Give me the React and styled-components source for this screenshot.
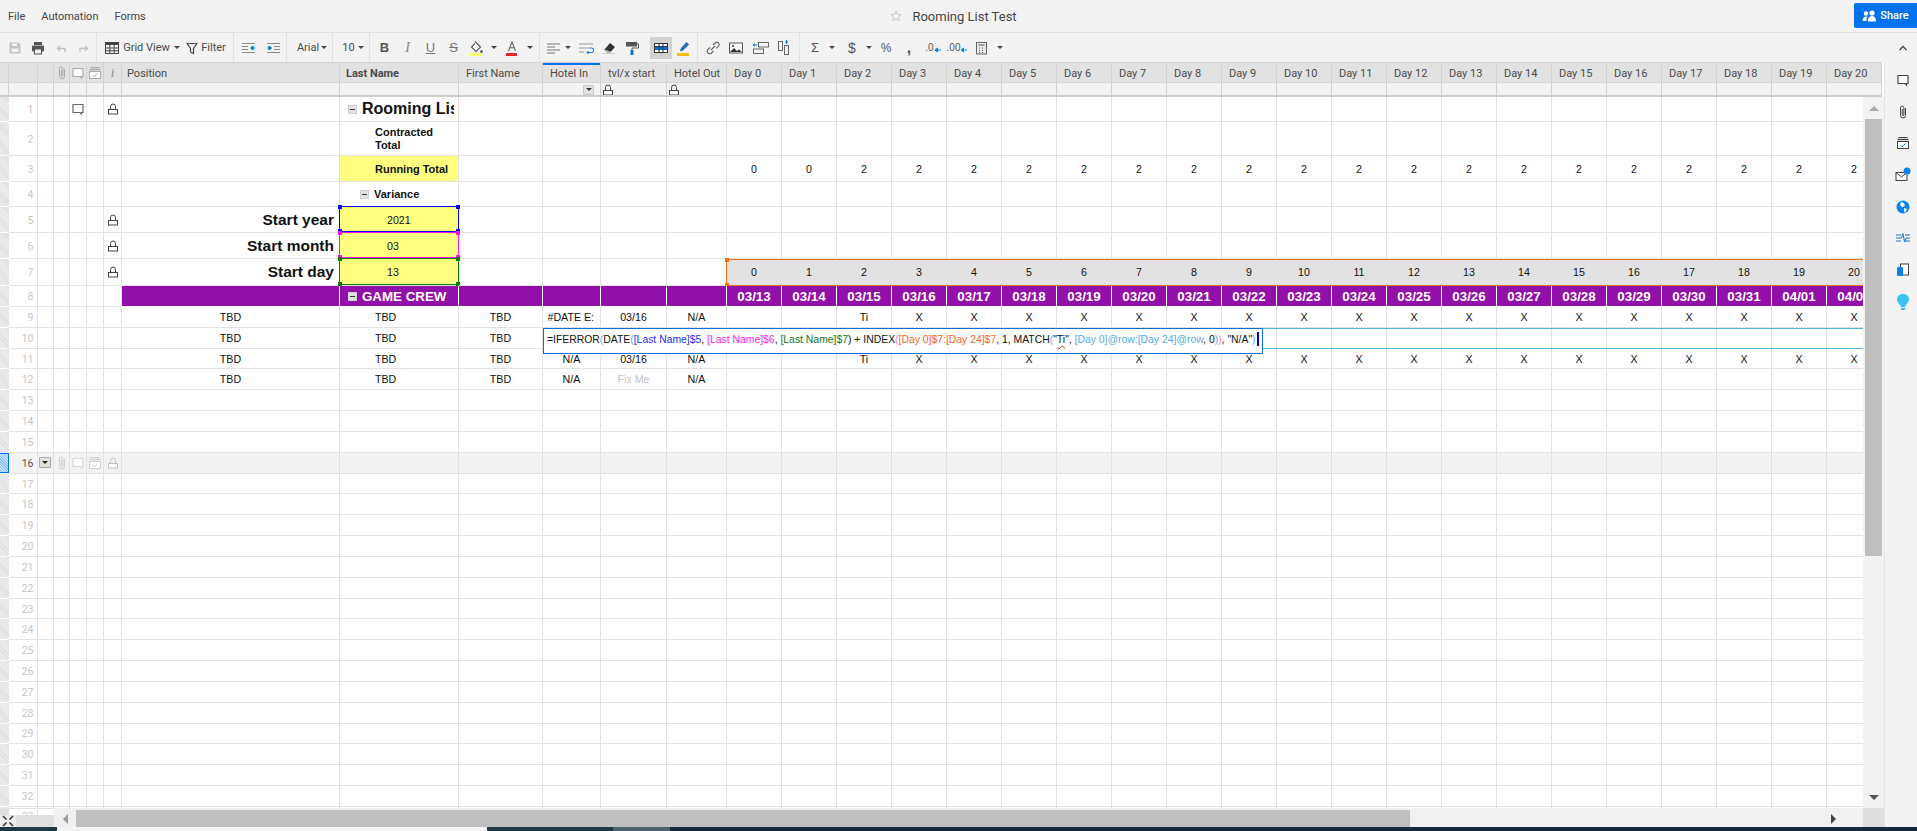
import React from "react";
import styled, { createGlobalStyle } from "styled-components";

const GlobalStyle = createGlobalStyle`
  html, body { margin: 0; padding: 0; background: #fff; overflow: hidden; }
  body { font-family: Roboto, "Liberation Sans", sans-serif; }
`;

const LINE = "#e2e2e2";
const HEAD = "#e2e2e2";
const PANEL = "#f3f3f3";
const PURPLE = "#930fa9";

const COLUMNS = "9px 28.5px 16.5px 16px 17px 17px 18px 218px 119px 84px 58px 66px 60px repeat(25, 55px)";

const Page = styled.div`
  width: 1917px;
  height: 831px;
  display: flex;
  flex-direction: column;
  overflow: hidden;
  background: ${PANEL};
`;

/* top menu */
const MenuBar = styled.div`
  height: 33px;
  flex: none;
  display: grid;
  grid-template-columns: 1fr auto 1fr;
  align-items: center;
  box-sizing: border-box;
  border-bottom: 1px solid ${LINE};
`;

const MenuList = styled.div`
  display: flex;
  gap: 16px;
  padding-left: 8px;
`;

const MenuItem = styled.span`
  font-size: 11px;
  color: #444;
`;

const Title = styled.div`
  display: flex;
  align-items: center;
  gap: 10px;
  padding-right: 10px;
  font-size: 13px;
  color: #444;
`;

const ShareWrap = styled.div`
  display: flex;
  justify-content: flex-end;
`;

const ShareButton = styled.button`
  width: 63px;
  height: 25px;
  margin-bottom: 1px;
  border: 0;
  border-radius: 2px 0 0 2px;
  background: #0073ec;
  color: #fff;
  font: 500 11px Roboto, sans-serif;
  display: flex;
  align-items: center;
  justify-content: center;
  gap: 4px;
  padding: 0;
`;

/* toolbar */
const ToolBar = styled.div`
  height: 29px;
  flex: none;
  display: flex;
  align-items: stretch;
  box-sizing: border-box;
`;

const ToolGroup = styled.div`
  width: ${(p) => p.$w}px;
  flex: none;
  box-sizing: border-box;
  padding-left: ${(p) => p.$pad || 0}px;
  display: flex;
  align-items: center;
  border-right: ${(p) => (p.$last ? "0" : `1px solid ${LINE}`)};
`;

const ToolButton = styled.div`
  width: ${(p) => p.$w || 23}px;
  height: 22px;
  flex: none;
  display: flex;
  align-items: center;
  justify-content: center;
  gap: ${(p) => p.$gap || 0}px;
  font-size: 11px;
  white-space: nowrap;
  color: #4a4a4a;
  background: ${(p) => (p.$active ? "#d2d2d2" : "transparent")};
  margin-left: ${(p) => p.$ml || 0}px;
`;

const Glyph = styled.span`
  font-family: ${(p) => (p.$serif ? '"Liberation Serif", serif' : '"Liberation Sans", sans-serif')};
  font-size: ${(p) => p.$size || 13}px;
  font-weight: ${(p) => (p.$bold ? 700 : 400)};
  font-style: ${(p) => (p.$italic ? "italic" : "normal")};
  text-decoration: ${(p) => p.$line || "none"};
  color: ${(p) => p.$color || "#555"};
`;

const Caret = styled.span`
  width: 0;
  height: 0;
  flex: none;
  border-left: 3px solid transparent;
  border-right: 3px solid transparent;
  border-top: 3px solid #444;
`;

const DecimalMark = styled.span`
  display: flex;
  align-items: flex-end;
  gap: 0;
`;

const ChevronWrap = styled.div`
  margin-left: auto;
  padding-right: 8px;
  display: flex;
  align-items: center;
`;

/* sheet */
const Main = styled.div`
  flex: 1;
  min-height: 0;
  display: flex;
`;

const Sheet = styled.div`
  width: 1884px;
  flex: none;
  display: flex;
  flex-direction: column;
  min-height: 0;
  background: #fff;
`;

const HeadClip = styled.div`
  width: 1882px;
  overflow: hidden;
  flex: none;
`;

const HeadRow = styled.div`
  display: grid;
  grid-template-columns: ${COLUMNS};
  height: ${(p) => p.$h}px;
  box-sizing: border-box;
  background: ${(p) => p.$bg};
  border-top: ${(p) => (p.$top ? "1px solid #d6d6d6" : "0")};
  border-bottom: ${(p) => (p.$thick ? "2px solid #cfcfcf" : "1px solid #d6d6d6")};
`;

const HeadCell = styled.div`
  box-sizing: border-box;
  position: relative;
  border-right: 1px solid #d2d2d2;
  display: flex;
  align-items: center;
  justify-content: ${(p) => (p.$center ? "center" : "flex-start")};
  padding-left: ${(p) => (p.$center ? 0 : p.$pad ?? 7)}px;
  padding-top: 1px;
  font-size: 11px;
  font-weight: ${(p) => (p.$bold ? 700 : 400)};
  color: #4b4b4b;
  white-space: nowrap;
  overflow: hidden;
  box-shadow: ${(p) => (p.$mark ? "inset 0 2px 0 #0073ec" : "none")};
`;

const FilterBox = styled.span`
  margin-left: auto;
  margin-right: 6px;
  width: 11px;
  height: 10px;
  background: #e2e2e2;
  border: 1px solid #c8c8c8;
  border-radius: 1px;
  box-sizing: border-box;
  display: flex;
  align-items: center;
  justify-content: center;
`;

const BodyWrap = styled.div`
  flex: 1;
  min-height: 0;
  display: flex;
`;

const Body = styled.div`
  width: 1863px;
  flex: none;
  overflow: hidden;
  position: relative;
`;

const Row = styled.div`
  display: grid;
  grid-template-columns: ${COLUMNS};
  height: ${(p) => p.$h}px;
  box-sizing: border-box;
  position: relative;
  background: ${(p) => (p.$selected ? PANEL : "#fff")};
`;

const Cell = styled.div`
  box-sizing: border-box;
  min-width: 0;
  position: relative;
  border-right: 1px solid ${LINE};
  border-bottom: 1px solid ${LINE};
  display: flex;
  align-items: center;
  justify-content: ${(p) => p.$align || "center"};
  padding-left: ${(p) => p.$pl || 0}px;
  padding-right: ${(p) => p.$pr || 0}px;
  background: ${(p) => p.$bg || "transparent"};
  font-family: "Liberation Sans", Arial, sans-serif;
  font-size: ${(p) => p.$size || 10.67}px;
  line-height: ${(p) => p.$lh || "normal"};
  font-weight: ${(p) => (p.$bold ? 700 : 400)};
  color: ${(p) => p.$color || "#111"};
  white-space: ${(p) => (p.$wrap ? "normal" : "nowrap")};
  overflow: ${(p) => (p.$clip ? "hidden" : "visible")};
`;

const CellClip = styled.span`
  display: block;
  overflow: hidden;
  width: ${(p) => p.$w}px;
`;

const Handle = styled.div`
  box-sizing: border-box;
  margin-bottom: 1px;
  background-color: ${(p) => (p.$selected ? "#8cc0f4" : "#dedede")};
  background-image: repeating-linear-gradient(
    45deg,
    rgba(255, 255, 255, 0.5) 0 1px,
    transparent 1px 2px
  );
  border: ${(p) => (p.$selected ? "1px solid #0073ec" : "0")};
  border-left: 0;
`;

const RowNum = styled(Cell)`
  justify-content: flex-end;
  padding-right: 3px;
  padding-top: 1px;
  font-family: Roboto, sans-serif;
  font-size: 10.5px;
  color: ${(p) => (p.$selected ? "#555" : "#c6c6c6")};
`;

const MinusBox = styled.span`
  width: ${(p) => p.$s || 9}px;
  height: ${(p) => p.$s || 9}px;
  flex: none;
  margin-right: ${(p) => p.$mr || 5}px;
  background: #e2e2e2;
  border: 1px solid #cfcfcf;
  box-sizing: border-box;
  display: flex;
  align-items: center;
  justify-content: center;
  &::after {
    content: "";
    width: 5px;
    height: 1px;
    background: #333;
  }
`;

const RowMenu = styled.span`
  width: 12px;
  height: 11px;
  background: #e0e0e0;
  border: 1px solid #a9a9a9;
  border-radius: 1px;
  box-sizing: border-box;
  display: flex;
  align-items: center;
  justify-content: center;
`;

const RefBox = styled.div`
  position: absolute;
  inset: -1px -1px 0 -1px;
  border: 1px solid ${(p) => p.$color};
  pointer-events: none;
`;

const Dot = styled.i`
  position: absolute;
  width: 4px;
  height: 4px;
  background: ${(p) => p.$color};
  top: ${(p) => (p.$b ? "auto" : "-2px")};
  bottom: ${(p) => (p.$b ? "-2px" : "auto")};
  left: ${(p) => (p.$r ? "auto" : "-2px")};
  right: ${(p) => (p.$r ? "-2px" : "auto")};
`;

const RangeBar = styled.div`
  position: absolute;
  top: ${(p) => p.$top || 0}px;
  bottom: 0;
  left: 726px;
  right: 0;
  border-top: 1px solid ${(p) => p.$color};
  border-bottom: 1px solid ${(p) => p.$color};
  border-left: ${(p) => (p.$open ? "0" : `1px solid ${p.$color}`)};
  pointer-events: none;
`;

const FormulaBox = styled.div`
  position: absolute;
  z-index: 3;
  left: 543px;
  top: 0;
  width: 720px;
  height: 26px;
  box-sizing: border-box;
  background: #fff;
  border: 1px solid #0a6fd8;
  padding: 3px 0 0 3px;
  font: 10.4px/16px "Liberation Sans", Arial, sans-serif;
  color: #111;
  white-space: nowrap;
  overflow: hidden;
`;

const Tok = styled.span`
  color: ${(p) => p.$c};
`;

const Squiggle = styled.span`
  text-decoration: underline wavy #e02020 1px;
  text-underline-offset: 2px;
`;

const TextCaret = styled.span`
  display: inline-block;
  width: 2px;
  height: 14px;
  margin-left: 1px;
  vertical-align: -3px;
  background: #0000d0;
`;

/* scrollbars */
const VScroll = styled.div`
  flex: 1;
  display: flex;
  flex-direction: column;
  align-items: center;
  background: ${PANEL};
`;

const ScrollArrowBox = styled.div`
  height: ${(p) => p.$h}px;
  flex: none;
  display: flex;
  align-items: center;
  justify-content: center;
`;

const VThumb = styled.div`
  width: 17px;
  height: 437px;
  flex: none;
  background: #bfbfbf;
`;

const Spring = styled.div`
  flex: 1;
`;

const HScroll = styled.div`
  height: 19px;
  flex: none;
  display: flex;
  background: #f0f0f0;
`;

const CornerStub = styled.div`
  width: 54px;
  flex: none;
  display: flex;
  flex-direction: column;
  background: #fff;
`;

const StubPeek = styled.div`
  height: 7px;
  flex: none;
  overflow: hidden;
  display: flex;
  box-sizing: border-box;
  border-top: 1px solid ${LINE};
`;

const StubHandle = styled.div`
  width: 9px;
  background: #dedede;
`;

const StubNumber = styled.div`
  width: 28.5px;
  box-sizing: border-box;
  border-right: 1px solid ${LINE};
  padding: 2px 3px 0 0;
  text-align: right;
  font-size: 10.5px;
  line-height: 12px;
  color: #c6c6c6;
`;

const StubBar = styled.div`
  flex: 1;
  display: flex;
  background: #e0e0e0;
`;

const StubIcon = styled.div`
  width: 16px;
  background: #ececec;
  display: flex;
  align-items: center;
  justify-content: center;
`;

const HArrowLeft = styled.div`
  width: 22px;
  flex: none;
  display: flex;
  align-items: center;
  justify-content: center;
  padding-top: 2px;
`;

const HThumb = styled.div`
  width: 1334px;
  flex: none;
  margin-top: 2px;
  background: #bfbfbf;
`;

const HArrowRight = styled.div`
  margin-left: auto;
  width: 32px;
  display: flex;
  align-items: center;
  justify-content: flex-start;
  padding-top: 2px;
`;

const HCorner = styled.div`
  width: 21px;
  flex: none;
  background: #dedede;
`;

/* right rail */
const Rail = styled.div`
  flex: 1;
  display: flex;
  flex-direction: column;
  align-items: center;
  padding: 2px 0 0 4px;
  border-left: 1px solid #e6e6e6;
  box-sizing: border-box;
`;

const RailItem = styled.div`
  height: 31.7px;
  flex: none;
  display: flex;
  align-items: center;
  justify-content: center;
`;

/* taskbar strip at the very bottom */
const Strip = styled.div`
  height: 4px;
  flex: none;
  display: grid;
  grid-template-columns: 57px 430px 126px 57px 1fr;
`;

const StripPart = styled.div`
  background: ${(p) => p.$c};
`;

/* icons */
const Svg = ({ w = 16, h = 16, vb, children }) => (
  <svg width={w} height={h} viewBox={vb || `0 0 ${w} ${h}`} fill="none">
    {children}
  </svg>
);

const CommentIcon = ({ c = "#555" }) => (
  <Svg w={14} h={14}>
    <path d="M2 2.5h10v8H10.5v1.6L9 10.5H2z" stroke={c} strokeWidth="1.2" fill="#fff" />
  </Svg>
);

const ClipIcon = ({ c = "#555" }) => (
  <Svg w={14} h={16}>
    <path
      d="M9.5 4v7.500a2.500 2.500 0 0 1-5 0V3.800a1.700 1.700 0 0 1 3.400 0v7a.8.8 0 0 1-1.600 0V5"
      stroke={c}
      strokeWidth="1"
    />
  </Svg>
);

const ProofIcon = ({ c = "#aaa", tick = "#aaa" }) => (
  <Svg w={14} h={14}>
    <path d="M2.5 1.5h9" stroke={c} />
    <path d="M1.5 3.5h11" stroke={c} strokeWidth="1.4" />
    <rect x="1.5" y="5.5" width="11" height="7" stroke={c} fill="#fff" />
    <path d="M4.500 9l1.800 1.800L9.500 7.500" stroke={tick} />
  </Svg>
);

const LockIcon = ({ c = "#444" }) => (
  <Svg w={12} h={12}>
    <path d="M3.500 6V3.500a2.500 2.500 0 0 1 5 0V6" stroke={c} />
    <rect x="1.5" y="6.5" width="9" height="4.5" stroke={c} fill="#fff" />
  </Svg>
);

const tb = {
  save: (
    <Svg>
      <path d="M2.500 2.500h9L13.500 4.500V13.500H2.500z" fill="#c4c4c4" />
      <rect x="5" y="3.500" width="5" height="2.500" fill="#f3f3f3" />
      <rect x="4.500" y="8.500" width="7" height="3.500" fill="#f3f3f3" />
    </Svg>
  ),
  print: (
    <Svg>
      <rect x="4" y="2" width="8" height="3" fill="#555" />
      <rect x="2" y="5.5" width="12" height="6" rx="1" fill="#555" />
      <rect x="4.5" y="9" width="7" height="5" fill="#f3f3f3" stroke="#555" />
    </Svg>
  ),
  undo: (
    <Svg>
      <path d="M12 12V8.500H5M7 6L4.500 8.500 7 11" stroke="#c0c0c0" strokeWidth="1.3" />
    </Svg>
  ),
  redo: (
    <Svg>
      <path d="M4 12V8.500h7M9 6l2.500 2.500L9 11" stroke="#c0c0c0" strokeWidth="1.3" />
    </Svg>
  ),
  grid: (
    <Svg w={14} h={14}>
      <rect x="0.5" y="1.5" width="13" height="11" stroke="#444" />
      <rect x="0.5" y="1.5" width="13" height="2.5" fill="#444" />
      <path d="M0.500 7h13M0.500 9.800h13M4.800 4v8.500M9.200 4v8.500" stroke="#444" />
    </Svg>
  ),
  filter: (
    <Svg w={12} h={14}>
      <path d="M1 2.500h10L7.500 7.500v5l-3-1.500V7.500z" stroke="#444" strokeWidth="1.2" />
    </Svg>
  ),
  outdent: (
    <Svg>
      <path d="M1 3.500h13M1 6.500h6M1 9.500h6M1 12.500h13" stroke="#888" />
      <path d="M14 8H10M12 6L9.500 8l2.500 2z" stroke="#0073ec" fill="#0073ec" />
    </Svg>
  ),
  indent: (
    <Svg>
      <path d="M2 3.500h13M9 6.500h6M9 9.500h6M2 12.500h13" stroke="#888" />
      <path d="M2 8h4M4 6l2.500 2L4 10z" stroke="#0073ec" fill="#0073ec" />
    </Svg>
  ),
  fill: (
    <Svg>
      <path d="M6 1.500l5.500 5.500L7 11.500 2.500 7 6 3.500" stroke="#555" strokeWidth="1.1" fill="#fff" />
      <path d="M12.500 9.500l1.200 1.800a1.300 1.300 0 1 1-2.400 0z" fill="#555" />
      <rect x="1" y="13" width="11" height="3" fill="#fdfd6c" />
    </Svg>
  ),
  fontColor: (
    <Svg>
      <path d="M4.500 11L8 2l3.500 9M6 7.800h4" stroke="#666" strokeWidth="1.1" />
      <rect x="2" y="13" width="11" height="3" fill="#e8262a" />
    </Svg>
  ),
  align: (
    <Svg>
      <path d="M1 4h13M1 7h8M1 10h13M1 13h8" stroke="#777" strokeWidth="1.1" />
    </Svg>
  ),
  wrap: (
    <Svg>
      <path d="M1 4h14M1 8h11M1 12h5" stroke="#999" />
      <path d="M12 8h1.500a2 2 0 0 1 0 4.500H9M10.500 11L9 12.500l1.500 1.500" stroke="#0073ec" />
    </Svg>
  ),
  eraser: (
    <Svg>
      <path d="M9 3l5 4-4 4.500H6L3.500 9.500z" fill="#333" />
      <path d="M3.500 9.500l3 2.500h3.500" stroke="#777" fill="#fff" />
      <path d="M1 13.500h13" stroke="#ccc" />
    </Svg>
  ),
  paint: (
    <Svg>
      <rect x="2" y="2" width="11" height="4.5" fill="#555" />
      <path d="M13 4h1.500v4H8v2" stroke="#555" />
      <rect x="6.5" y="10" width="3" height="5" fill="#1271c4" />
    </Svg>
  ),
  freeze: (
    <Svg w={14} h={12}>
      <rect x="0.5" y="1.5" width="13" height="9" fill="#fff" stroke="#333" />
      <rect x="1" y="5" width="12" height="3" fill="#0a6fd8" />
      <path d="M5 1.500v9M9 1.500v9M0.500 4.500h13" stroke="#333" />
    </Svg>
  ),
  pen: (
    <Svg>
      <path d="M10.500 2l2.500 2.500L7 10.500 3.800 11.500 5 8z" fill="#1e6cc0" />
      <rect x="1" y="13" width="12" height="3" fill="#f6b91a" />
    </Svg>
  ),
  link: (
    <Svg>
      <path d="M6 10l4-4M5 7.500L3 9.500a2.400 2.400 0 0 0 3.500 3.500l2-2M8 5l2-2a2.400 2.400 0 0 1 3.400 3.400l-2 2" stroke="#666" strokeWidth="1.1" />
    </Svg>
  ),
  image: (
    <Svg>
      <rect x="1.5" y="3" width="13" height="10" fill="#fff" stroke="#555" />
      <path d="M2 12l4-4 3 3 2-1.500 3 2.500z" fill="#333" />
      <circle cx="5" cy="6" r="1" fill="#333" />
    </Svg>
  ),
  rowAdd: (
    <Svg w={18} h={16}>
      <rect x="6.5" y="2.5" width="10" height="4.5" stroke="#666" />
      <rect x="1.5" y="9" width="10" height="4.5" stroke="#666" />
      <path d="M1 5h4M3 3.500L1 5l2 1.500" stroke="#0073ec" />
    </Svg>
  ),
  colAdd: (
    <Svg w={14} h={16}>
      <rect x="1.5" y="1.5" width="4" height="9" stroke="#666" />
      <rect x="7.5" y="5.5" width="4" height="9" stroke="#666" />
      <path d="M9.500 0v4M8 2h3" stroke="#0073ec" />
    </Svg>
  ),
  format: (
    <Svg>
      <rect x="2.5" y="2.5" width="10" height="11.5" fill="#e8e8e8" stroke="#666" />
      <path d="M4.500 5h6M5 8h1M8 8h1M5 10.500h1M8 10.500h1M5 12.500h1M8 12.500h1" stroke="#555" />
    </Svg>
  ),
  chevron: (
    <Svg w={12} h={12}>
      <path d="M2.500 8L6 4.500 9.500 8" stroke="#444" strokeWidth="1.3" />
    </Svg>
  ),
  blueArrow: (
    <Svg w={7} h={6}>
      <path d="M7 3H2M3.500 1L1 3l2.500 2z" stroke="#0a84ec" fill="#0a84ec" />
    </Svg>
  ),
};

const StarIcon = () => (
  <Svg w={12} h={12}>
    <path d="M6 1l1.500 3.400 3.600.3-2.800 2.400.9 3.600L6 8.800l-3.200 1.900.9-3.600L.9 4.700l3.600-.3z" stroke="#c8c8c8" />
  </Svg>
);

const PeopleIcon = () => (
  <Svg w={14} h={12}>
    <circle cx="4" cy="3.5" r="2.2" fill="#fff" />
    <circle cx="10" cy="3" r="2.6" fill="#fff" />
    <path d="M0.500 11c0-3 1.500-4.500 3.500-4.500 .6 0 1 .1 1.400.3C4.600 8 4.400 9.400 4.400 11zM5.800 11.500c0-3.500 1.600-5.500 4.200-5.500s4 2 4 5.500z" fill="#fff" />
  </Svg>
);

const FitIcon = () => (
  <Svg w={12} h={12}>
    <path d="M1 1l3.500 3.500M11 1L7.500 4.500M1 11l3.500-3.500M11 11L7.500 7.500" stroke="#222" strokeWidth="1.4" />
  </Svg>
);

const Tri = ({ dir, c = "#555", s = 5 }) => {
  const pts = {
    up: `0,${s} ${s},0 ${s * 2},${s}`,
    down: `0,0 ${s * 2},0 ${s},${s}`,
    left: `${s},0 ${s},${s * 2} 0,${s}`,
    right: `0,0 0,${s * 2} ${s},${s}`,
  }[dir];
  const horiz = dir === "up" || dir === "down";
  return (
    <svg width={horiz ? s * 2 : s} height={horiz ? s : s * 2}>
      <polygon points={pts} fill={c} />
    </svg>
  );
};

const railIcons = [
  <CommentIcon key="c" c="#444" />,
  <ClipIcon key="a" c="#444" />,
  <ProofIcon key="p" c="#444" tick="#0a6fd8" />,
  <Svg key="m" w={16} h={16}>
    <rect x="1" y="5.5" width="11" height="8" fill="#fff" stroke="#444" />
    <path d="M1 5.500l5.500 4.500L12 5.500" stroke="#444" />
    <circle cx="12" cy="4" r="3.5" fill="#0a84ec" />
  </Svg>,
  <Svg key="g" w={16} h={16}>
    <circle cx="8" cy="8" r="6.5" fill="#0a84ec" />
    <path d="M6 3l3 1 1 3-3 1-2-2zM9 9l3 1-2 4-1-2z" fill="#fff" />
  </Svg>,
  <Svg key="s" w={16} h={16}>
    <path d="M1 5h5M1 8h4M1 11h5M10 5h5M11 8h4M10 11h5" stroke="#1c75c8" />
    <path d="M5 8h1.500L8 3.500 9.500 12 11 8" stroke="#1c75c8" />
  </Svg>,
  <Svg key="b" w={16} h={16}>
    <rect x="5.5" y="2" width="8" height="11" fill="#fff" stroke="#444" />
    <rect x="2" y="5" width="6" height="9" rx="1" fill="#0a84ec" />
  </Svg>,
  <Svg key="l" w={16} h={18}>
    <path d="M8 1c4 0 6 2.600 6 5.500S10.500 11.500 10 14H6C5.500 11.500 2 9.400 2 6.500S4 1 8 1z" fill="#39c6ee" />
    <rect x="6" y="15" width="4" height="2" fill="#39c6ee" />
  </Svg>,
];

/* sheet data */
const DAYS = Array.from({ length: 25 }, (_, i) => i);
const dateFor = (i) => {
  const d = new Date(2021, 2, 13 + i);
  return `${String(d.getMonth() + 1).padStart(2, "0")}/${String(d.getDate()).padStart(2, "0")}`;
};

const rowHeight = (n) => ({ 1: 25, 2: 34, 3: 26, 4: 25, 5: 26, 6: 26, 7: 27, 8: 21 })[n] || 20.83;

const CREW = {
  9: { hotel: "#DATE E:", tvl: "03/16" },
  10: { hotel: "", tvl: "" },
  11: { hotel: "N/A", tvl: "03/16" },
  12: { hotel: "N/A", tvl: "Fix Me", muted: true },
};

const Empty = ({ n = 1 }) => Array.from({ length: n }, (_, i) => <Cell key={i} />);

const LeftColumns = ({ n, selected, comment, lock }) => (
  <>
    <Handle $selected={selected} />
    <RowNum $selected={selected}>{n}</RowNum>
    <Cell>
      {selected && (
        <RowMenu>
          <Tri dir="down" c="#222" s={3} />
        </RowMenu>
      )}
    </Cell>
    <Cell>{selected && <ClipIcon c="#d0d0d0" />}</Cell>
    <Cell>{(comment || selected) && <CommentIcon c={selected ? "#d8d8d8" : "#666"} />}</Cell>
    <Cell>{selected && <ProofIcon c="#d0d0d0" tick="#d0d0d0" />}</Cell>
    <Cell>{(lock || selected) && <LockIcon c={selected ? "#c4c4c4" : "#444"} />}</Cell>
  </>
);

const RangeCell = ({ color, children, pl }) => (
  <Cell $bg="#ffff80" $align="flex-start" $pl={pl}>
    {children}
    <RefBox $color={color}>
      <Dot $color={color} />
      <Dot $color={color} $r />
      <Dot $color={color} $b />
      <Dot $color={color} $b $r />
    </RefBox>
  </Cell>
);

const LabelCell = ({ children }) => (
  <Cell $align="flex-end" $pr={5} $size={15.5} $bold>
    {children}
  </Cell>
);

const PurpleCell = styled(Cell)`
  background: ${PURPLE};
  border-right-color: #fff;
  border-bottom-color: #fff;
`;

const Formula = () => (
  <FormulaBox>
    =IFERROR<Tok $c="#55b4dc">(</Tok>DATE<Tok $c="#55b4dc">(</Tok>
    <Tok $c="#1f2fe8">[Last Name]$5</Tok>, <Tok $c="#f01ff0">[Last Name]$6</Tok>,{" "}
    <Tok $c="#0a7a2a">[Last Name]$7</Tok>) + INDEX<Tok $c="#f080e0">(</Tok>
    <Tok $c="#f3661c">[Day 0]$7:[Day 24]$7</Tok>, 1, MATCH<Tok $c="#55b4dc">(</Tok>"
    <Squiggle>Ti</Squiggle>", <Tok $c="#55aee0">[Day 0]@row:[Day 24]@row</Tok>, 0
    <Tok $c="#55b4dc">)</Tok>
    <Tok $c="#f080e0">)</Tok>, "N/A"<Tok $c="#55b4dc">)</Tok>
    <TextCaret />
  </FormulaBox>
);

const SheetRow = ({ n }) => {
  const h = rowHeight(n);
  const left = (
    <LeftColumns
      n={n}
      selected={n === 16}
      comment={n === 1}
      lock={n === 1 || n === 5 || n === 6 || n === 7}
    />
  );

  if (n === 1) {
    return (
      <Row $h={h}>
        {left}
        <Cell />
        <Cell $align="flex-start" $pl={8} $size={16} $bold $clip>
          <MinusBox $mr={5} />
          <CellClip $w={92}>Rooming List Test</CellClip>
        </Cell>
        <Empty n={29} />
      </Row>
    );
  }
  if (n === 2) {
    return (
      <Row $h={h}>
        {left}
        <Cell />
        <Cell $align="flex-start" $pl={35} $size={11} $lh="13px" $bold $wrap>
          Contracted Total
        </Cell>
        <Empty n={29} />
      </Row>
    );
  }
  if (n === 3) {
    return (
      <Row $h={h}>
        {left}
        <Cell />
        <Cell $align="flex-start" $pl={35} $size={11} $bold $bg="#ffff80">
          Running Total
        </Cell>
        <Empty n={4} />
        {DAYS.map((d) => (
          <Cell key={d}>{d < 2 ? 0 : 2}</Cell>
        ))}
      </Row>
    );
  }
  if (n === 4) {
    return (
      <Row $h={h}>
        {left}
        <Cell />
        <Cell $align="flex-start" $pl={20} $size={11} $bold>
          <MinusBox $mr={5} />
          Variance
        </Cell>
        <Empty n={29} />
      </Row>
    );
  }
  if (n >= 5 && n <= 7) {
    const label = { 5: "Start year", 6: "Start month", 7: "Start day" }[n];
    const value = { 5: "2021", 6: "03", 7: "13" }[n];
    const color = { 5: "#0000f0", 6: "#ff10f0", 7: "#0a7a0a" }[n];
    return (
      <Row $h={h}>
        {left}
        <LabelCell>{label}</LabelCell>
        <RangeCell color={color} pl={47}>
          {value}
        </RangeCell>
        <Empty n={4} />
        {DAYS.map((d) =>
          n === 7 ? (
            <Cell key={d} $bg={HEAD}>
              {d}
            </Cell>
          ) : (
            <Cell key={d} />
          )
        )}
        {n === 7 && (
          <RangeBar $color="#f36f16">
            <Dot $color="#f36f16" />
            <Dot $color="#f36f16" $b />
          </RangeBar>
        )}
      </Row>
    );
  }
  if (n === 8) {
    return (
      <Row $h={h}>
        {left}
        <PurpleCell />
        <PurpleCell $align="flex-start" $pl={8} $size={13.33} $bold $color="#fff">
          <MinusBox $mr={5} />
          GAME CREW
        </PurpleCell>
        {[0, 1, 2, 3].map((i) => (
          <PurpleCell key={i} />
        ))}
        {DAYS.map((d) => (
          <PurpleCell key={d} $size={13.33} $bold $color="#fff">
            {dateFor(d)}
          </PurpleCell>
        ))}
      </Row>
    );
  }
  if (CREW[n]) {
    const row = CREW[n];
    const showDays = n === 9 || n === 11;
    return (
      <Row $h={h}>
        {left}
        <Cell>TBD</Cell>
        <Cell $align="flex-start" $pl={35}>
          TBD
        </Cell>
        <Cell>TBD</Cell>
        <Cell $clip>{n === 9 ? <CellClip $w={48}>{row.hotel}</CellClip> : row.hotel}</Cell>
        <Cell $color={row.muted ? "#c4c4c4" : "#111"}>{row.tvl}</Cell>
        <Cell>{n === 10 ? "" : "N/A"}</Cell>
        {DAYS.map((d) => (
          <Cell key={d}>{showDays && d >= 2 ? (d === 2 ? "Ti" : "X") : ""}</Cell>
        ))}
        {n === 10 && <RangeBar $color="#55b4dc" $open />}
        {n === 10 && <Formula />}
      </Row>
    );
  }
  return (
    <Row $h={h} $selected={n === 16}>
      {left}
      <Empty n={31} />
    </Row>
  );
};

const ROWS = Array.from({ length: 33 }, (_, i) => i + 1);

const App = () => (
  <Page>
    <GlobalStyle />
    <MenuBar>
      <MenuList>
        <MenuItem>File</MenuItem>
        <MenuItem>Automation</MenuItem>
        <MenuItem>Forms</MenuItem>
      </MenuList>
      <Title>
        <StarIcon />
        Rooming List Test
      </Title>
      <ShareWrap>
        <ShareButton>
          <PeopleIcon />
          Share
        </ShareButton>
      </ShareWrap>
    </MenuBar>

    <ToolBar>
      <ToolGroup $w={97} $pad={3}>
        <ToolButton>{tb.save}</ToolButton>
        <ToolButton>{tb.print}</ToolButton>
        <ToolButton>{tb.undo}</ToolButton>
        <ToolButton>{tb.redo}</ToolButton>
      </ToolGroup>
      <ToolGroup $w={137} $pad={8}>
        <ToolButton $w={75} $gap={4}>
          {tb.grid}
          Grid View
          <Caret />
        </ToolButton>
        <ToolButton $w={40} $gap={3} $ml={6}>
          {tb.filter}
          Filter
        </ToolButton>
      </ToolGroup>
      <ToolGroup $w={53} $pad={3}>
        <ToolButton $w={24}>{tb.outdent}</ToolButton>
        <ToolButton $w={24}>{tb.indent}</ToolButton>
      </ToolGroup>
      <ToolGroup $w={46} $pad={9}>
        <ToolButton $w={32} $gap={2}>
          Arial
          <Caret />
        </ToolButton>
      </ToolGroup>
      <ToolGroup $w={37} $pad={9}>
        <ToolButton $w={22} $gap={3}>
          10
          <Caret />
        </ToolButton>
      </ToolGroup>
      <ToolGroup $w={170} $pad={3}>
        <ToolButton>
          <Glyph $bold $size={13}>B</Glyph>
        </ToolButton>
        <ToolButton>
          <Glyph $italic $serif $size={14} $color="#888">I</Glyph>
        </ToolButton>
        <ToolButton>
          <Glyph $size={13} $line="underline" $color="#777">U</Glyph>
        </ToolButton>
        <ToolButton>
          <Glyph $size={13} $line="line-through" $color="#777">S</Glyph>
        </ToolButton>
        <ToolButton>{tb.fill}</ToolButton>
        <ToolButton $w={12}>
          <Caret />
        </ToolButton>
        <ToolButton $w={24}>{tb.fontColor}</ToolButton>
        <ToolButton $w={12}>
          <Caret />
        </ToolButton>
      </ToolGroup>
      <ToolGroup $w={158} $pad={4}>
        <ToolButton $w={20}>{tb.align}</ToolButton>
        <ToolButton $w={8}>
          <Caret />
        </ToolButton>
        <ToolButton $w={28}>{tb.wrap}</ToolButton>
        <ToolButton $w={18}>{tb.eraser}</ToolButton>
        <ToolButton $w={28}>{tb.paint}</ToolButton>
        <ToolButton $w={22} $ml={4} $active>
          {tb.freeze}
        </ToolButton>
        <ToolButton $w={24}>{tb.pen}</ToolButton>
      </ToolGroup>
      <ToolGroup $w={102} $pad={3}>
        <ToolButton $w={24}>{tb.link}</ToolButton>
        <ToolButton $w={22}>{tb.image}</ToolButton>
        <ToolButton $w={28}>{tb.rowAdd}</ToolButton>
        <ToolButton $w={18}>{tb.colAdd}</ToolButton>
      </ToolGroup>
      <ToolGroup $w={1117} $pad={3} $last>
        <ToolButton $w={24}>
          <Glyph $size={13}>Σ</Glyph>
        </ToolButton>
        <ToolButton $w={10}>
          <Caret />
        </ToolButton>
        <ToolButton $w={26} $ml={2}>
          <Glyph $size={14}>$</Glyph>
        </ToolButton>
        <ToolButton $w={8}>
          <Caret />
        </ToolButton>
        <ToolButton $w={26}>
          <Glyph $size={12}>%</Glyph>
        </ToolButton>
        <ToolButton $w={20}>
          <Glyph $size={16} $bold>,</Glyph>
        </ToolButton>
        <ToolButton $w={28}>
          <DecimalMark>
            <Glyph $size={10}>.0</Glyph>
            {tb.blueArrow}
          </DecimalMark>
        </ToolButton>
        <ToolButton $w={20}>
          <DecimalMark>
            <Glyph $size={10}>.00</Glyph>
            {tb.blueArrow}
          </DecimalMark>
        </ToolButton>
        <ToolButton $w={30}>{tb.format}</ToolButton>
        <ToolButton $w={6}>
          <Caret />
        </ToolButton>
        <ChevronWrap>{tb.chevron}</ChevronWrap>
      </ToolGroup>
    </ToolBar>

    <Main>
      <Sheet>
        <HeadClip>
          <HeadRow $h={21} $bg={HEAD} $top>
            <HeadCell />
            <HeadCell />
            <HeadCell />
            <HeadCell $center>
              <ClipIcon c="#aaa" />
            </HeadCell>
            <HeadCell $center>
              <CommentIcon c="#aaa" />
            </HeadCell>
            <HeadCell $center>
              <ProofIcon />
            </HeadCell>
            <HeadCell $center>
              <Glyph $serif $italic $size={13} $color="#888">i</Glyph>
            </HeadCell>
            <HeadCell $pad={5}>Position</HeadCell>
            <HeadCell $bold $pad={6}>Last Name</HeadCell>
            <HeadCell>First Name</HeadCell>
            <HeadCell $mark>Hotel In</HeadCell>
            <HeadCell>tvl/x start</HeadCell>
            <HeadCell>Hotel Out</HeadCell>
            {DAYS.map((d) => (
              <HeadCell key={d}>Day {d}</HeadCell>
            ))}
          </HeadRow>
          <HeadRow $h={14} $bg={PANEL} $thick>
            {Array.from({ length: 10 }, (_, i) => (
              <HeadCell key={i} />
            ))}
            <HeadCell>
              <FilterBox>
                <Tri dir="down" c="#333" s={3} />
              </FilterBox>
            </HeadCell>
            <HeadCell $pad={1}>
              <LockIcon />
            </HeadCell>
            <HeadCell $pad={1}>
              <LockIcon />
            </HeadCell>
            {DAYS.map((d) => (
              <HeadCell key={d} />
            ))}
          </HeadRow>
        </HeadClip>

        <BodyWrap>
          <Body>
            {ROWS.map((n) => (
              <SheetRow key={n} n={n} />
            ))}
          </Body>
          <VScroll>
            <ScrollArrowBox $h={22}>
              <Tri dir="up" c="#a8a8a8" />
            </ScrollArrowBox>
            <VThumb />
            <Spring />
            <ScrollArrowBox $h={22}>
              <Tri dir="down" c="#555" />
            </ScrollArrowBox>
          </VScroll>
        </BodyWrap>

        <HScroll>
          <CornerStub>
            <StubPeek>
              <StubHandle />
              <StubNumber>33</StubNumber>
            </StubPeek>
            <StubBar>
              <StubIcon>
                <FitIcon />
              </StubIcon>
            </StubBar>
          </CornerStub>
          <HArrowLeft>
            <Tri dir="left" c="#999" />
          </HArrowLeft>
          <HThumb />
          <HArrowRight>
            <Tri dir="right" c="#444" />
          </HArrowRight>
          <HCorner />
        </HScroll>
      </Sheet>
      <Rail>
        {railIcons.map((icon, i) => (
          <RailItem key={i}>{icon}</RailItem>
        ))}
      </Rail>
    </Main>

    <Strip>
      <StripPart $c="#1f3a44" />
      <StripPart $c="#f3f3f3" />
      <StripPart $c="#1f3a44" />
      <StripPart $c="#4d5f68" />
      <StripPart $c="#16293b" />
    </Strip>
  </Page>
);

export default App;
